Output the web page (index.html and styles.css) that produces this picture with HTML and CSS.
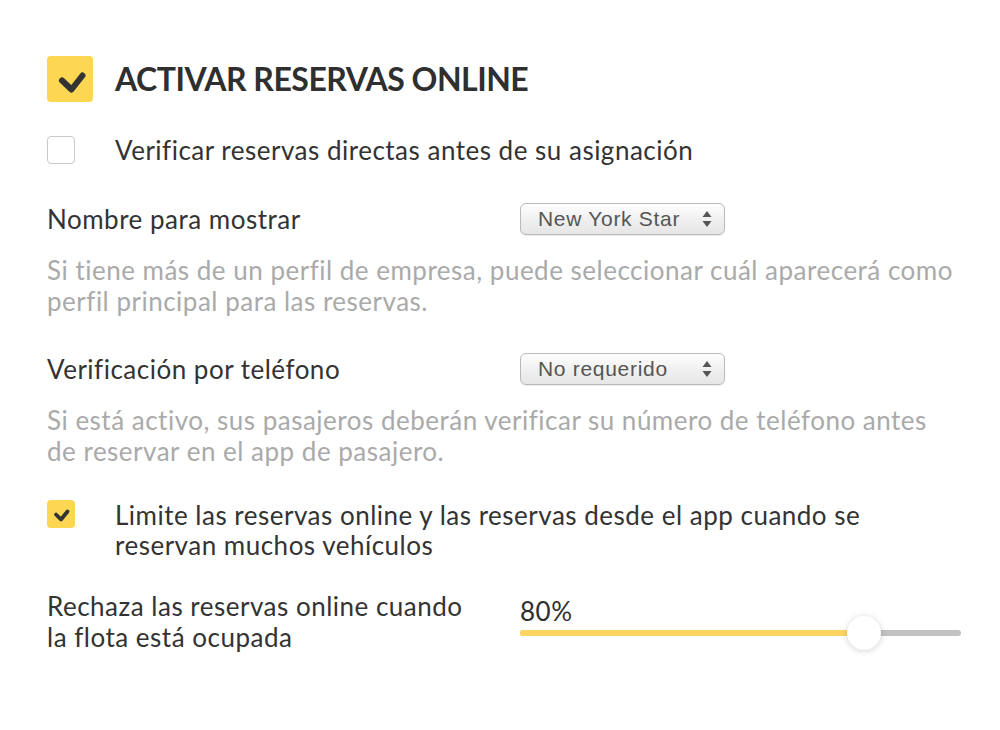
FILE: index.html
```html
<!DOCTYPE html>
<html lang="es">
<head>
<meta charset="utf-8">
<title>Reservas online</title>
<link rel="stylesheet" href="styles.css">
</head>
<body>
<div class="panel">
  <div class="head-row">
    <span class="box box-lg checked">
      <svg viewBox="0 0 46 46" width="46" height="46"><path d="M15 24.5 L24.5 33.5 L35.5 19.5" fill="none" stroke="#333" stroke-width="6" stroke-linecap="round" stroke-linejoin="round"/></svg>
    </span>
    <h1 class="title">ACTIVAR RESERVAS ONLINE</h1>
  </div>

  <div class="check-row verify">
    <span class="box box-sm"></span>
    <span class="check-text">Verificar reservas directas antes de su asignación</span>
  </div>

  <div class="field first">
    <span class="label">Nombre para mostrar</span>
    <div class="select narrow"><span class="select-text clip">New York Star</span><span class="arrows"><svg viewBox="0 0 10 18" width="10" height="18"><path d="M5 1 L9.5 7 L0.5 7 Z M5 17 L9.5 11 L0.5 11 Z" fill="#555"/></svg></span></div>
  </div>
  <p class="help">Si tiene más de un perfil de empresa, puede seleccionar cuál aparecerá como perfil principal para las reservas.</p>

  <div class="field second">
    <span class="label">Verificación por teléfono</span>
    <div class="select"><span class="select-text">No requerido</span><span class="arrows"><svg viewBox="0 0 10 18" width="10" height="18"><path d="M5 1 L9.5 7 L0.5 7 Z M5 17 L9.5 11 L0.5 11 Z" fill="#555"/></svg></span></div>
  </div>
  <p class="help">Si está activo, sus pasajeros deberán verificar su número de teléfono antes de reservar en el app de pasajero.</p>

  <div class="check-row limit">
    <span class="box box-sm checked">
      <svg viewBox="0 0 28 28" width="28" height="28"><path d="M9 14.5 L14 19.5 L20.5 11.5" fill="none" stroke="#333" stroke-width="3.8" stroke-linecap="round" stroke-linejoin="round"/></svg>
    </span>
    <span class="check-text">Limite las reservas online y las reservas desde el app cuando se reservan muchos vehículos</span>
  </div>

  <div class="slider-row">
    <span class="label slider-label">Rechaza las reservas online cuando la flota está ocupada</span>
    <div class="slider">
      <span class="slider-value">80%</span>
      <div class="track">
        <div class="fill" style="width: 78%"></div>
        <span class="thumb" style="left: 78%"></span>
      </div>
    </div>
  </div>
</div>
</body>
</html>
```

FILE: styles.css
```css
html, body {
  margin: 0;
  padding: 0;
  background: #fff;
}
body {
  font-family: Lato, "Open Sans", sans-serif;
  color: #333;
  width: 1000px;
  height: 730px;
  overflow: hidden;
}
.panel {
  padding: 56px 0 0 47px;
  width: 914px;
}
.head-row {
  display: flex;
  align-items: center;
  gap: 22px;
  height: 46px;
}
.box {
  display: flex;
  align-items: center;
  justify-content: center;
  box-sizing: border-box;
  flex: none;
  border-radius: 4px;
}
.box-lg {
  width: 46px;
  height: 46px;
}
.box-sm {
  width: 28px;
  height: 28px;
  border: 1.5px solid #c9c9c9;
  border-radius: 4px;
}
.box.checked {
  background: #fdd652;
  border: none;
}
.box svg { display: block; }
.title {
  margin: 0;
  font-size: 32px;
  font-weight: 700;
  letter-spacing: -0.5px;
  line-height: 46px;
  color: #2f2f2f;
}
.check-row {
  display: flex;
  gap: 40px;
  font-size: 26px;
  letter-spacing: 0.5px;
  line-height: 30px;
}
.check-row.verify {
  margin-top: 33px;
  align-items: center;
}
.check-row.limit {
  margin-top: 33px;
  align-items: flex-start;
}
.check-text {
  flex: 1;
  max-width: 780px;
}
.field {
  display: grid;
  grid-template-columns: 473px auto;
  align-items: center;
  height: 32px;
}
.field.first { margin-top: 38px; }
.field.second { margin-top: 36px; }
.label {
  font-size: 26px;
  letter-spacing: 0.5px;
  line-height: 31px;
}
.select {
  display: flex;
  align-items: center;
  justify-content: space-between;
  box-sizing: border-box;
  width: 205px;
  height: 32px;
  padding: 0 12px 0 17px;
  border: 1px solid #b9b9b9;
  border-radius: 6px;
  background: linear-gradient(#ffffff, #f0f0f0 50%, #e6e6e6);
  box-shadow: inset 0 1px 0 #fff, 0 1px 1px rgba(0,0,0,0.08);
  font-family: "Liberation Sans", Arial, sans-serif;
  font-size: 21px;
  letter-spacing: 0.7px;
  color: #555;
}
.select-text {
  white-space: nowrap;
}
.select-text.clip {
  width: 144px;
  overflow: hidden;
}
.arrows svg { display: block; }
.help {
  margin: 20px 0 0;
  font-size: 26px;
  letter-spacing: 0.5px;
  line-height: 31px;
  color: #aaaaaa;
  max-width: 910px;
}
.slider-row {
  display: grid;
  grid-template-columns: 473px 441px;
  margin-top: 31px;
}
.slider-label {
  max-width: 420px;
}
.slider {
  display: flex;
  flex-direction: column;
}
.slider-value {
  font-size: 26px;
  letter-spacing: 0.5px;
  line-height: 26px;
  margin-top: 7px;
  color: #2f2f2f;
}
.track {
  position: relative;
  height: 6px;
  margin-top: 6px;
  border-radius: 3px;
  background: #c2c2c4;
}
.fill {
  height: 6px;
  border-radius: 3px;
  background: #fcd462;
}
.thumb {
  position: absolute;
  top: 50%;
  width: 34px;
  height: 34px;
  margin: -17px 0 0 -17px;
  border-radius: 50%;
  background: #fff;
  box-shadow: 0 1px 6px rgba(0,0,0,0.18);
}
```
